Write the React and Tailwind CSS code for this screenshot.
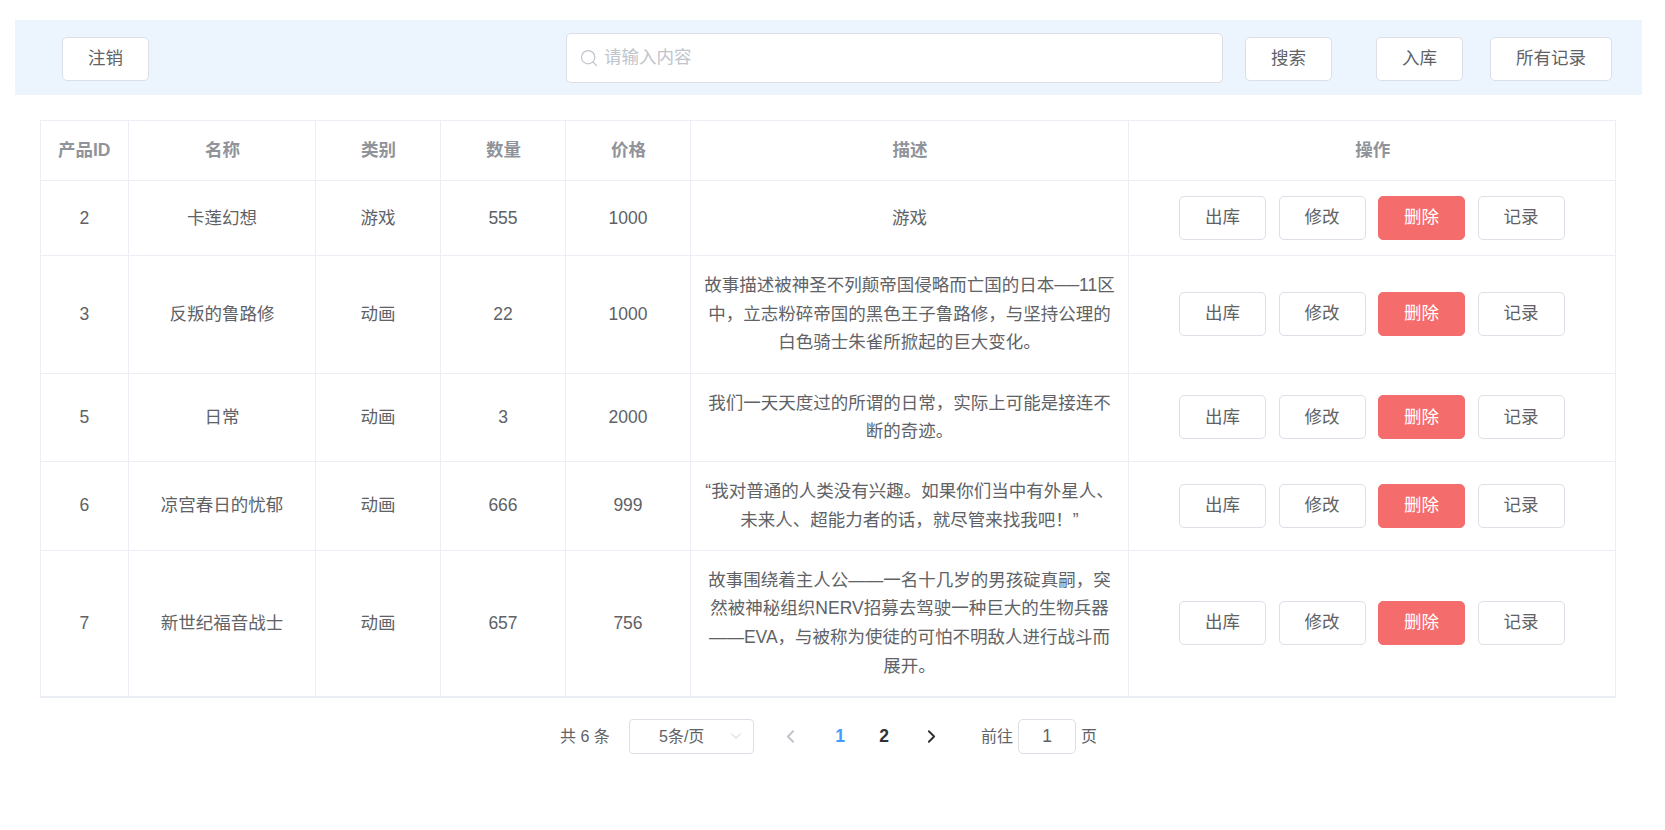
import React from "react";
import { Search, ChevronDown, ChevronLeft, ChevronRight } from "lucide-react";

const rows = [
  { id: 2, h: "h-[75px]", name: "卡莲幻想", cat: "游戏", qty: 555, price: 1000, desc: "游戏" },
  { id: 3, h: "h-[118px]", name: "反叛的鲁路修", cat: "动画", qty: 22, price: 1000, desc: "故事描述被神圣不列颠帝国侵略而亡国的日本──11区中，立志粉碎帝国的黑色王子鲁路修，与坚持公理的白色骑士朱雀所掀起的巨大变化。" },
  { id: 5, h: "h-[88px]", name: "日常", cat: "动画", qty: 3, price: 2000, desc: "我们一天天度过的所谓的日常，实际上可能是接连不断的奇迹。" },
  { id: 6, h: "h-[88px]", name: "凉宫春日的忧郁", cat: "动画", qty: 666, price: 999, desc: "“我对普通的人类没有兴趣。如果你们当中有外星人、未来人、超能力者的话，就尽管来找我吧！”" },
  { id: 7, h: "h-[145px]", name: "新世纪福音战士", cat: "动画", qty: 657, price: 756, desc: "故事围绕着主人公——一名十几岁的男孩碇真嗣，突然被神秘组织NERV招募去驾驶一种巨大的生物兵器——EVA，与被称为使徒的可怕不明敌人进行战斗而展开。" },
];

const widths = [87, 187, 125, 125, 125, 438, 487];
const heads = ["产品ID", "名称", "类别", "数量", "价格", "描述", "操作"];

function Btn({ children, danger, className = "" }) {
  return (
    <button
      className={
        "h-[44px] px-[25px] rounded-[5px] border text-[17.5px] leading-none whitespace-nowrap " +
        (danger ? "bg-[#f56c6c] border-[#f56c6c] text-white " : "bg-white border-[#dcdfe6] text-[#606266] ") +
        className
      }
    >
      {children}
    </button>
  );
}

const base = "border-r border-b border-[#ebeef5] text-center align-middle leading-[28.75px] font-normal";

export default function App() {
  return (
    <div className="w-[1665px] h-[830px] bg-white pt-[20px] overflow-hidden text-[#606266] font-['Liberation_Sans','Noto_Sans_CJK_SC',sans-serif]">
      <div className="ml-[15px] w-[1627px] h-[75px] bg-[#ecf5fd] flex items-center pl-[47px]">
        <Btn className="mt-[2px]">注销</Btn>
        <div className="ml-[417px] w-[657px] h-[50px] bg-white border border-[#dcdfe6] rounded-[5px] flex items-center pl-[12px] gap-[5px] text-[17.5px] text-[#c0c4cc]">
          <Search size={20} strokeWidth={1.5} className="text-[#c0c4cc]" />
          <span>请输入内容</span>
        </div>
        <Btn className="ml-[22px] mt-[2px]">搜索</Btn>
        <Btn className="ml-[44px] mt-[2px]">入库</Btn>
        <Btn className="ml-[27px] mt-[2px]">所有记录</Btn>
      </div>

      <div className="ml-[40px] mt-[25px] w-[1576px] border-t border-l border-r border-b border-[#ebeef5]">
        <table className="w-[1574px] table-fixed border-collapse text-[17.5px]">
          <colgroup>
            {widths.map((w, i) => (
              <col key={i} style={{ width: w }} />
            ))}
          </colgroup>
          <thead>
            <tr className="h-[59px]">
              {heads.map((h, i) => (
                <th key={h} className={"border-r border-b border-[#ebeef5] text-center align-middle leading-[28.75px] font-bold text-[#909399] last:border-r-0 " + (i === 0 ? "px-0" : "pl-[2px] pr-0")}>
                  {h}
                </th>
              ))}
            </tr>
          </thead>
          <tbody>
            {rows.map((r) => {
              const v = r.id === 2 ? " pt-[16px] pb-[14px]" : " py-[15px]";
              const cell = base + " pl-[13px] pr-[12px]" + v;
              return (
                <tr key={r.id} className={r.h}>
                  <td className={base + " px-[12.5px]" + v}>{r.id}</td>
                  <td className={cell}>{r.name}</td>
                  <td className={cell}>{r.cat}</td>
                  <td className={cell}>{r.qty}</td>
                  <td className={cell}>{r.price}</td>
                  <td className={cell}>{r.desc}</td>
                  <td className={base + " border-r-0 px-[12.5px] py-[15px]"}>
                    <div className="flex justify-center gap-[12.5px]">
                      <Btn>出库</Btn>
                      <Btn>修改</Btn>
                      <Btn danger>删除</Btn>
                      <Btn>记录</Btn>
                    </div>
                  </td>
                </tr>
              );
            })}
          </tbody>
        </table>
      </div>

      <div className="mt-[21px] pl-[560px] flex items-center h-[35px] text-[16px] text-[#606266]">
        <span className="w-[51px] whitespace-nowrap mt-[2px]">共 6 条</span>
        <div className="ml-[18px] w-[125px] h-[35px] border border-[#dcdfe6] rounded-[4px] flex items-center pl-[29px] pr-[8px]">
          <span className="flex-1 mt-[2px]">5条/页</span>
          <ChevronDown size={18} strokeWidth={1.25} className="text-[#c0c4cc]" />
        </div>
        <ChevronLeft size={21} strokeWidth={2.2} className="ml-[26px] text-[#c0c4cc]" />
        <span className="ml-[34px] w-[10px] text-center font-bold text-[#409eff] text-[17.5px]">1</span>
        <span className="ml-[34px] w-[10px] text-center font-bold text-[#303133] text-[17.5px]">2</span>
        <ChevronRight size={21} strokeWidth={2.2} className="ml-[32px] text-[#303133]" />
        <span className="ml-[39px] mt-[2px]">前往</span>
        <div className="ml-[5px] w-[58px] h-[35px] border border-[#dcdfe6] rounded-[5px] flex items-center justify-center text-[17.5px]">1</div>
        <span className="ml-[5px] mt-[2px]">页</span>
      </div>
    </div>
  );
}
